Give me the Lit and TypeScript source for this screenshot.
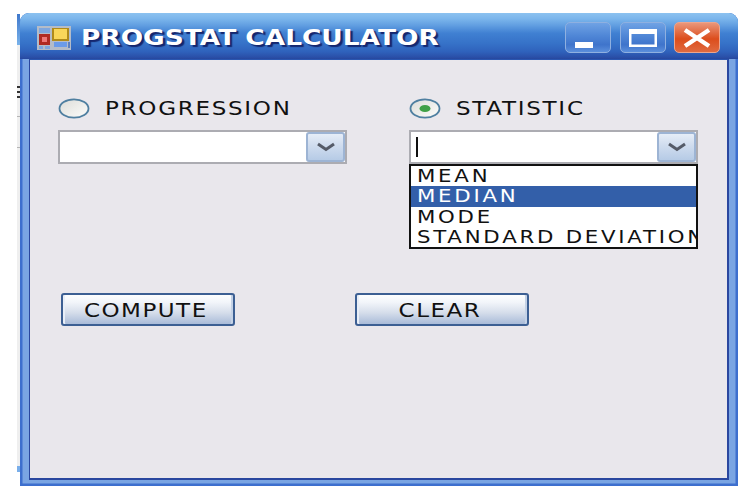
import { LitElement, html, css, svg } from "lit";
import { customElement } from "lit/decorators.js";

const chevron = svg`<svg class="chev" viewBox="0 0 20 10" width="20" height="10"><path d="M2 2 L10 7.5 L18 2" fill="none" stroke="#555b68" stroke-width="3"/></svg>`;

@customElement("app-root")
export class AppRoot extends LitElement {
  static styles = css`
    :host { display: block; width: 751px; height: 500px; background: #fff; overflow: hidden; font-family: "DejaVu Sans", "Liberation Sans", sans-serif; }
    .page { display: flex; padding: 13px 0 0 17px; align-items: flex-start; }
    .behind { width: 3px; height: 458px; flex: none; display: flex; flex-direction: column; background: #efefef; margin-top: 1px; }
    .behind .b1 { height: 31px; flex: none; background: linear-gradient(#3f78cc, #79b2ea); }
    .behind .gap1 { height: 41px; flex: none; }
    .behind .mark { height: 1.5px; flex: none; background: #333; margin-bottom: 3.5px; }
    .behind .gap2 { height: 15px; flex: none; }
    .behind .line { height: 1px; flex: none; background: #b5b5b5; margin-bottom: 30px; }
    .behind .fill { flex: 1; }
    .behind .b5 { height: 6px; flex: none; background: #79aeea; }
    .window { width: 718px; height: 473px; flex: none; box-sizing: border-box; display: flex; flex-direction: column; background: #7aa5e3; box-shadow: inset 0 0 0 2.5px #3d6fce; border-radius: 9px 9px 0 0; padding: 0 9px 0 9px; }
    .title { height: 46px; margin: 0 -9px; padding: 3px 18px 0 17px; box-sizing: border-box; display: flex; align-items: center; flex: none; border-radius: 9px 9px 0 0; background: linear-gradient(#8cc2f0 0, #7cb6ec 12%, #63a0e2 26%, #4080d2 44%, #3672c8 66%, #2f62bc 84%, #2a4fa8 96%, #27479e 100%); }
    .appicon { flex: none; margin-right: 10px; }
    .title h1 { flex: 1; margin: 0; font: bold 22px "DejaVu Sans", sans-serif; color: #fff; text-shadow: 2px 1.5px 1px #14266e; white-space: nowrap; }
    .wide { display: inline-block; transform: scaleX(1.15); transform-origin: left center; }
    .title h1 .wide { transform: scaleX(1.2); }
    .wbtn { width: 46px; height: 31px; box-sizing: border-box; margin-left: 9px; flex: none; border: 1.5px solid #8fb0e0; border-radius: 5px; background: linear-gradient(#6fa2e4, #4f86d6 45%, #3f74cb 75%, #5b8fdc); display: flex; align-items: center; justify-content: center; }
    .wbtn.next { margin-left: 8px; }
    .wbtn.close { border-color: #eea58c; background: linear-gradient(#ea967a, #dc4d1c 55%, #e06a40); }
    .min { margin: 14px 8px 0 0; }
    .body { flex: 1; background: #e9e7ec; border: 1px solid #2a479f; border-width: 1px 2px 2px 1px; border-top-color: #2a56b0; margin-bottom: 6px; padding: 37px 28px 0 28px; display: flex; flex-direction: column; }
    .cols { display: flex; gap: 62px; height: 196px; flex: none; }
    .col { width: 289px; flex: none; }
    .radio { display: flex; align-items: center; height: 22px; margin-bottom: 11px; }
    .radio svg { flex: none; margin-right: 15px; }
    .lbl { font-size: 20px; letter-spacing: 1.5px; color: #111; white-space: nowrap; }
    .combo { height: 34px; box-sizing: border-box; background: #fff; border: 2px solid #acacb2; display: flex; align-items: center; position: relative; }
    .caret { width: 2px; height: 20px; background: #111; margin-left: 5px; }
    .drop { width: 39px; height: 30px; box-sizing: border-box; border: 2px solid #9db4d4; border-radius: 3px; background: linear-gradient(#e6edf7, #cfdcee 45%, #b6cbe6); display: flex; align-items: center; justify-content: center; margin-left: auto; }
    .list { position: relative; z-index: 1; box-sizing: border-box; height: 85px; border: 2px solid #111; background: #fff; overflow: hidden; display: flex; flex-direction: column; }
    .item { height: 20.25px; flex: none; padding-left: 6px; font-size: 18.5px; letter-spacing: 2.4px; line-height: 20px; color: #111; white-space: nowrap; }
    .item.sel { background: #335fa9; color: #fff; }
    .actions { display: flex; gap: 120px; margin-left: 3px; }
    .btn { width: 174px; height: 33px; box-sizing: border-box; border: 2px solid #3c5f93; border-radius: 3px; padding-right: 5px; background: linear-gradient(#fdfefe 0, #f2f5fa 25%, #d6deeb 60%, #a9bbd8 100%); display: flex; align-items: center; justify-content: center; font-size: 20px; letter-spacing: 1.3px; color: #111; box-shadow: inset 2px 0 0 #e8eef7, inset -2px 0 0 #c4d2e6; }
    .btn .wide { transform-origin: center; }
  `;

  private radio(checked: boolean) {
    return svg`<svg width="32" height="21" viewBox="0 0 32 21">
      <defs><linearGradient id="r" x1="0" y1="0" x2="1" y2="1"><stop offset="0" stop-color="#dcdcd8"/><stop offset="1" stop-color="#fdfdfb"/></linearGradient></defs>
      <ellipse cx="16" cy="10.5" rx="14.5" ry="9.2" fill="url(#r)" stroke="#4f7fa0" stroke-width="1.8"/>
      ${checked ? svg`<ellipse cx="16" cy="10.5" rx="5.5" ry="3.6" fill="#3fa046"/>` : ""}
    </svg>`;
  }

  render() {
    return html`<div class="page">
      <div class="behind">
        <div class="b1"></div><div class="gap1"></div>
        <div class="mark"></div><div class="mark"></div><div class="mark"></div>
        <div class="gap2"></div><div class="line"></div><div class="line"></div>
        <div class="fill"></div><div class="b5"></div>
      </div>
      <div class="window">
        <div class="title">
          <svg class="appicon" width="34" height="24" viewBox="0 0 34 24">
            <rect width="34" height="24" fill="#b4bcc8"/>
            <rect x="2" y="2" width="11" height="5" fill="#7ea6de"/>
            <rect x="2" y="8" width="11" height="11" fill="#b02a22"/><rect x="5" y="11" width="5" height="5" fill="#e77"/>
            <rect x="15" y="2" width="17" height="13" fill="#b08a1a"/><rect x="17" y="3" width="13" height="10" fill="#f9d65a"/>
            <rect x="17" y="16" width="13" height="5" fill="#6b9be8"/>
            <rect x="2" y="20" width="4" height="3" fill="#7ea6de"/><rect x="8" y="20" width="5" height="3" fill="#7ea6de"/><rect x="31" y="16" width="2" height="6" fill="#5c80c0"/>
          </svg>
          <h1><span class="wide">PROGSTAT CALCULATOR</span></h1>
          <div class="wbtn"><svg class="min" width="18" height="6" viewBox="0 0 18 6"><rect width="18" height="6" fill="#fff"/></svg></div>
          <div class="wbtn"><svg width="28" height="18" viewBox="0 0 28 18"><rect x="1.25" y="2" width="25.5" height="14.75" fill="none" stroke="#fff" stroke-width="2.5"/><rect width="28" height="5" fill="#fff"/></svg></div>
          <div class="wbtn next close"><svg width="30" height="20" viewBox="0 0 30 20"><path d="M3 2 L27 18 M27 2 L3 18" stroke="#fff" stroke-width="4.5"/></svg></div>
        </div>
        <div class="body">
          <div class="cols">
            <div class="col">
              <div class="radio">${this.radio(false)}<span class="lbl wide">PROGRESSION</span></div>
              <div class="combo"><div class="drop">${chevron}</div></div>
            </div>
            <div class="col">
              <div class="radio">${this.radio(true)}<span class="lbl wide">STATISTIC</span></div>
              <div class="combo"><div class="caret"></div><div class="drop">${chevron}</div></div>
              <div class="list">
                <div class="item"><span class="wide">MEAN</span></div>
                <div class="item sel"><span class="wide">MEDIAN</span></div>
                <div class="item"><span class="wide">MODE</span></div>
                <div class="item"><span class="wide">STANDARD DEVIATION</span></div>
              </div>
            </div>
          </div>
          <div class="actions">
            <div class="btn"><span class="wide">COMPUTE</span></div>
            <div class="btn"><span class="wide">CLEAR</span></div>
          </div>
        </div>
      </div>
    </div>`;
  }
}
